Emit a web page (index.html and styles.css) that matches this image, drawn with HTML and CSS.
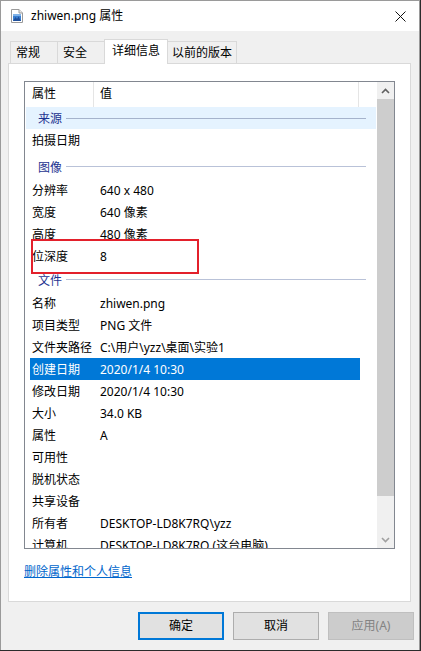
FILE: index.html
```html
<!DOCTYPE html>
<html lang="zh-CN">
<head>
<meta charset="utf-8">
<title>zhiwen.png 属性</title>
<link rel="stylesheet" href="styles.css">
</head>
<body>
<div class="window">
  <div class="titlebar">
    <svg class="app-icon" width="12" height="14" viewBox="0 0 12 14">
      <path d="M0.5 0.5 H8 L11.5 4 V13.5 H0.5 Z" fill="#ffffff" stroke="#9a9a9a"/>
      <path d="M8 0.5 V4 H11.5" fill="#e8e8e8" stroke="#9a9a9a"/>
      <rect x="2" y="5" width="8" height="7" fill="#3a7fd0"/>
      <path d="M2 12 L4.5 8 L6 10 L7.5 7.5 L10 12 Z" fill="#1f4f9a"/>
      <rect x="2" y="5" width="8" height="2" fill="#7fb2e8"/>
    </svg>
    <span class="title">zhiwen.png 属性</span>
    <svg class="close" width="11" height="11" viewBox="0 0 11 11">
      <path d="M0.5 0.5 L10.5 10.5 M10.5 0.5 L0.5 10.5" stroke="#111" stroke-width="1"/>
    </svg>
  </div>
  <div class="body">
    <div class="tabs">
      <div class="tab tab-general">常规</div>
      <div class="tab tab-security">安全</div>
      <div class="tab tab-details active">详细信息</div>
      <div class="tab tab-previous">以前的版本</div>
    </div>
    <div class="panel">
      <div class="list">
        <div class="list-main">
          <div class="list-header">
            <div class="h-name">属性</div>
            <div class="h-val">值</div>
            <div class="h-rest"></div>
          </div>
          <div class="rows">
            <div class="group group-first focused"><span>来源</span><i class="rule"></i></div>
            <div class="row"><span class="n">拍摄日期</span><span class="v"></span></div>
            <div class="group group-tall"><span>图像</span><i class="rule"></i></div>
            <div class="row"><span class="n">分辨率</span><span class="v">640 x 480</span></div>
            <div class="row"><span class="n">宽度</span><span class="v">640 像素</span></div>
            <div class="row"><span class="n">高度</span><span class="v">480 像素</span></div>
            <div class="row"><span class="n">位深度</span><span class="v">8</span></div>
            <div class="group"><span>文件</span><i class="rule"></i></div>
            <div class="row"><span class="n">名称</span><span class="v">zhiwen.png</span></div>
            <div class="row"><span class="n">项目类型</span><span class="v">PNG 文件</span></div>
            <div class="row"><span class="n">文件夹路径</span><span class="v">C:\用户\yzz\桌面\实验1</span></div>
            <div class="row selected"><span class="n">创建日期</span><span class="v">2020/1/4 10:30</span></div>
            <div class="row"><span class="n">修改日期</span><span class="v">2020/1/4 10:30</span></div>
            <div class="row"><span class="n">大小</span><span class="v">34.0 KB</span></div>
            <div class="row"><span class="n">属性</span><span class="v">A</span></div>
            <div class="row"><span class="n">可用性</span><span class="v"></span></div>
            <div class="row"><span class="n">脱机状态</span><span class="v"></span></div>
            <div class="row"><span class="n">共享设备</span><span class="v"></span></div>
            <div class="row"><span class="n">所有者</span><span class="v">DESKTOP-LD8K7RQ\yzz</span></div>
            <div class="row"><span class="n">计算机</span><span class="v">DESKTOP-LD8K7RQ (这台电脑)</span></div>
          </div>
        </div>
        <div class="scrollbar">
          <div class="sb-btn">
            <svg width="9" height="6" viewBox="0 0 9 6"><path d="M1 5 L4.5 1.5 L8 5" fill="none" stroke="#606060" stroke-width="1.6"/></svg>
          </div>
          <div class="sb-thumb"></div>
          <div class="sb-track"></div>
          <div class="sb-btn">
            <svg width="9" height="6" viewBox="0 0 9 6"><path d="M1 1 L4.5 4.5 L8 1" fill="none" stroke="#a0a0a0" stroke-width="1.6"/></svg>
          </div>
        </div>
      </div>
      <a class="link" href="#">删除属性和个人信息</a>
    </div>
    <div class="buttons">
      <button class="btn btn-default">确定</button>
      <button class="btn">取消</button>
      <button class="btn btn-disabled">应用(A)</button>
    </div>
  </div>
  <div class="annotation"></div>
</div>
</body>
</html>
```
FILE: styles.css
```css
* { box-sizing: border-box; }
html, body { margin: 0; padding: 0; background: #2b2b2b; }
body {
  width: 421px;
  height: 651px;
  font-family: "Noto Sans", "Noto Sans CJK SC", sans-serif;
  font-size: 12px;
  color: #000;
}
.window {
  position: relative;
  width: 420px;
  height: 650px;
  border: 1px solid #9a9a9a;
  border-bottom: none;
  background: #f0f0f0;
  display: flex;
  flex-direction: column;
}
.titlebar {
  height: 30px;
  background: #fff;
  display: flex;
  align-items: center;
  padding-left: 10px;
}
.app-icon { margin-top: 0; }
.title {
  margin-left: 8px;
  font-size: 12px;
  line-height: 16px;
}
.close { margin-left: auto; margin-right: 13px; }
.body {
  flex: 1;
  padding: 9px 0 0 7px;
  display: flex;
  flex-direction: column;
}
.tabs {
  display: flex;
  align-items: flex-end;
  padding-left: 2px;
  height: 23px;
  position: relative;
  z-index: 2;
}
.tab {
  height: 22px;
  border: 1px solid #d9d9d9;
  border-bottom: none;
  background: #f0f0f0;
  line-height: 21px;
  padding-left: 5px;
  margin-right: -1px;
  white-space: nowrap;
}
.tab-general { width: 48px; }
.tab-security { width: 48px; }
.tab-details { width: 64px; padding-left: 7px; }
.tab-previous { width: 70px; padding-left: 4px; }
.tab.active {
  height: 25px;
  margin-bottom: -1px;
  background: #fff;
  line-height: 22px;
  position: relative;
  z-index: 1;
}
.panel {
  width: 403px;
  height: 539px;
  background: #fff;
  border: 1px solid #d9d9d9;
  padding: 17px 0 0 15px;
  display: flex;
  flex-direction: column;
  align-items: flex-start;
}
.list {
  width: 371px;
  height: 468px;
  border: 1px solid #828790;
  display: flex;
  overflow: hidden;
}
.list-main {
  width: 352px;
  display: flex;
  flex-direction: column;
  overflow: hidden;
}
.list-header {
  height: 25px;
  display: flex;
  flex: none;
  line-height: 24px;
}
.h-name {
  width: 69px;
  padding-left: 7px;
  border-right: 1px solid #e5e5e5;
}
.h-val {
  width: 265px;
  padding-left: 6px;
  border-right: 1px solid #e5e5e5;
}
.h-rest { flex: 1; }
.rows {
  flex: 1;
  overflow: hidden;
}
.group {
  height: 25px;
  margin-left: 1px;
  width: 350px;
  display: flex;
  align-items: center;
  padding: 0 10px 0 12px;
  color: #1e3390;
}
.group-first { height: 22px; }
.group-tall { height: 28px; padding-top: 3px; }
.group.focused { background: #e5f3ff; }
.group .rule {
  flex: 1;
  height: 1px;
  margin-left: 4px;
  background: #b9c2d8;
}
.group.focused .rule { background: #a5b3cc; }
.row {
  height: 22px;
  margin-left: 5px;
  width: 330px;
  display: flex;
  align-items: center;
  white-space: nowrap;
}
.row .n {
  width: 70px;
  flex: none;
  padding-left: 2px;
}
.row .v { flex: none; }
.row.selected {
  background: #0078d7;
  color: #fff;
}
.scrollbar {
  width: 17px;
  flex: none;
  background: #f0f0f0;
  display: flex;
  flex-direction: column;
}
.sb-btn {
  height: 17px;
  flex: none;
  display: flex;
  align-items: center;
  justify-content: center;
}
.sb-thumb {
  height: 397px;
  flex: none;
  background: #cdcdcd;
}
.sb-track { flex: 1; }
.link {
  margin-top: 15px;
  margin-left: 0;
  line-height: 16px;
  color: #0066cc;
  text-decoration: underline;
}
.buttons {
  display: flex;
  gap: 9px;
  padding: 10px 0 0 130px;
}
.btn {
  width: 86px;
  height: 28px;
  font-family: "Noto Sans", "Noto Sans CJK SC", sans-serif;
  font-size: 12px;
  color: #000;
  background: #e1e1e1;
  border: 1px solid #adadad;
  padding: 0;
  line-height: 26px;
}
.btn-default {
  border: 2px solid #0078d7;
  line-height: 24px;
}
.btn-disabled {
  background: #cccccc;
  border-color: #bfbfbf;
  color: #838383;
}
.annotation {
  position: absolute;
  left: 30px;
  top: 238px;
  width: 168px;
  height: 35px;
  border: 2px solid #e3202b;
  pointer-events: none;
}
```
